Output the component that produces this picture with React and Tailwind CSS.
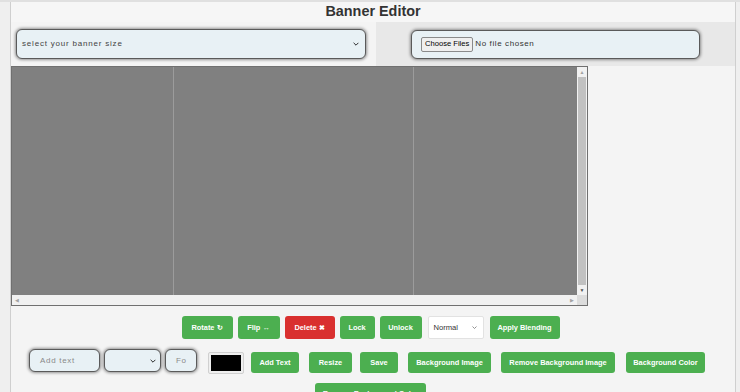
import React from 'react';

const btn = 'h-[23px] rounded-[3px] bg-[#4caf50] text-white text-[7.4px] font-bold flex items-center justify-center shrink-0';
const btn2 = 'h-[21px] rounded-[3px] bg-[#4caf50] text-white text-[7.4px] font-bold flex items-center justify-center shrink-0';
const field = 'h-[23px] rounded-[6px] bg-[#e8f1f5] border border-[#5a5a5a] shadow-[0_0_3px_1px_rgba(0,0,0,0.4)] shrink-0';

function Chevron({ className }) {
  return (
    <svg viewBox="0 0 10 6" className={className} fill="none" stroke="currentColor" strokeWidth="1.6">
      <path d="M1 1l4 4 4-4" />
    </svg>
  );
}

export default function App() {
  return (
    <div className="w-[740px] h-[392px] overflow-hidden bg-[#efefef] font-['Liberation_Sans',Arial,sans-serif]">
      <div className="h-[2px] bg-[#e0e0e0]" />
      <div className="ml-[10px] w-[726px] h-[390px] border-x border-[#cfcfcf] bg-[#f4f4f4]">
        {/* Header */}
        <h1 className="h-[20px] leading-[18px] text-center text-[14.4px] font-bold text-[#333] bg-[#f6f6f6]">Banner Editor</h1>

        {/* Size + file */}
        <div className="grid grid-cols-[365px_1fr] h-[44px]">
          <div className="flex items-center pl-[5px]">
            <div className={`${field} w-[350px] h-[30px] flex items-center justify-between pl-[5px] pr-[6px] text-[8px] tracking-[0.8px] text-[#444]`}>
              <span>select your banner size</span>
              <Chevron className="w-[6px] h-[4px] text-[#222]" />
            </div>
          </div>
          <div className="bg-[#e8e8e8] flex items-center justify-center">
            <div className={`${field} w-[289px] h-[29px] flex items-center pl-[9px] text-[8px]`}>
              <span className="h-[15px] px-[3px] flex items-center bg-[#efefef] border border-[#8a8a8a] rounded-[2px] text-[7.6px] text-black">Choose Files</span>
              <span className="ml-[2px] tracking-[0.6px] text-[#333]">No file chosen</span>
            </div>
          </div>
        </div>

        {/* Canvas */}
        <div className="w-[577px] h-[240px] border border-[#707070] flex flex-col">
          <div className="flex flex-1 min-h-0">
            <div className="flex-1 flex bg-[#808080]">
              <div className="w-[162px] border-r border-[#9c9c9c]" />
              <div className="w-[240px] border-r border-[#9c9c9c]" />
              <div className="flex-1" />
            </div>
            <div className="w-[10px] bg-[#f1f1f1] flex flex-col items-center">
              <div className="h-[10px] flex items-center justify-center text-[#a3a3a3] text-[5px] leading-none">▲</div>
              <div className="flex-1 w-[8px] bg-[#c1c1c1]" />
              <div className="h-[10px] flex items-center justify-center text-[#505050] text-[5px] leading-none">▼</div>
            </div>
          </div>
          <div className="flex h-[10px]">
            <div className="flex-1 bg-[#f1f1f1] flex items-center justify-between px-[3px] text-[5px] text-[#a3a3a3] leading-none">
              <span>◀</span>
              <span>▶</span>
            </div>
            <div className="w-[10px] bg-[#dcdcdc]" />
          </div>
        </div>

        {/* Row 1 */}
        <div className="mt-[10px] flex justify-center gap-[5px] pr-[5px]">
          <div className={`${btn} w-[51px]`}>Rotate ↻</div>
          <div className={`${btn} w-[42px]`}>Flip ↔</div>
          <div className={`${btn} w-[50px] bg-[#d9302f]`}>Delete ✖</div>
          <div className={`${btn} w-[35px]`}>Lock</div>
          <div className={`${btn} w-[42px]`}>Unlock</div>
          <div className="h-[23px] w-[56px] mx-[1px] bg-white border border-[#e2e2e2] rounded-[2px] flex items-center justify-between pl-[5px] pr-[6px] text-[7.6px] text-[#333]">
            <span>Normal</span>
            <Chevron className="w-[5px] h-[3px] text-[#777]" />
          </div>
          <div className={`${btn} w-[70px]`}>Apply Blending</div>
        </div>

        {/* Row 2 */}
        <div className="mt-[10px] flex items-start pl-[18px]">
          <div className={`${field} w-[71px] mr-[4px] flex items-center pl-[10px] text-[8px] tracking-[0.7px] text-[#8a8a8a]`}>Add text</div>
          <div className={`${field} w-[57px] mr-[4px] flex items-center justify-end pr-[4px]`}>
            <Chevron className="w-[6px] h-[4px] text-[#222]" />
          </div>
          <div className={`${field} w-[32px] mr-[11px] flex items-center pl-[10px] text-[8px] tracking-[0.7px] text-[#8a8a8a]`}>Fo</div>
          <div className="mt-[3px] mr-[7px] w-[36px] h-[22px] p-[2px] bg-[#efefef] border border-[#d0d0d0] rounded-[2px] shrink-0">
            <div className="w-full h-full bg-black" />
          </div>
          <div className={`${btn2} mt-[3px] w-[48px] mr-[10px]`}>Add Text</div>
          <div className={`${btn2} mt-[3px] w-[43px] mr-[8px]`}>Resize</div>
          <div className={`${btn2} mt-[3px] w-[38px] mr-[10px]`}>Save</div>
          <div className={`${btn2} mt-[3px] w-[83px] mr-[10px]`}>Background Image</div>
          <div className={`${btn2} mt-[3px] w-[114px] mr-[11px]`}>Remove Background Image</div>
          <div className={`${btn2} mt-[3px] w-[79px]`}>Background Color</div>
        </div>

        {/* Row 3 */}
        <div className="mt-[9px] flex justify-center pr-[5px]">
          <div className={`${btn2} w-[111px]`}>Remove Background Color</div>
        </div>
      </div>
    </div>
  );
}
